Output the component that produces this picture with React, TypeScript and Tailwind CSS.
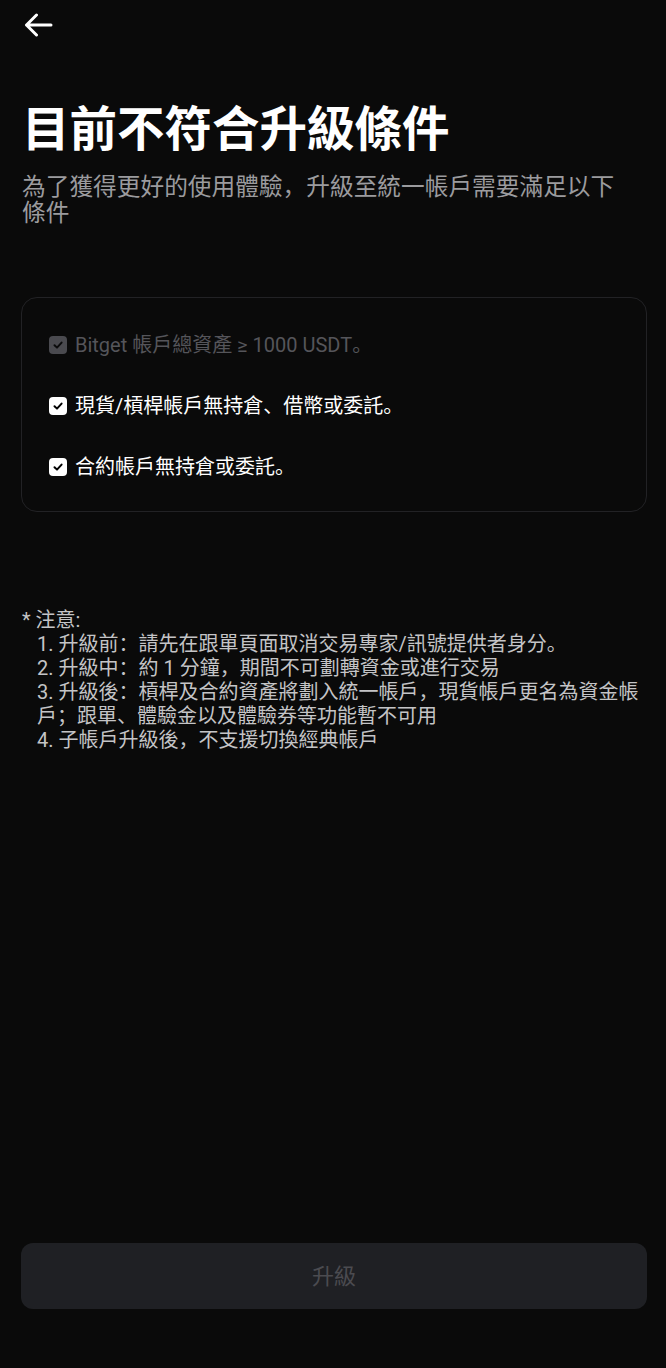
const font = { fontFamily: 'Roboto, "Noto Sans CJK SC", "Noto Sans CJK TC", sans-serif' };

function Check({ muted }: { muted?: boolean }) {
  return (
    <span
      className={`flex h-[18px] w-[18px] shrink-0 items-center justify-center rounded-[4px] ${
        muted ? "bg-[#4a4a4f]" : "bg-white"
      }`}
    >
      <svg width="12" height="12" viewBox="0 0 12 12" fill="none">
        <path
          d="M2.5 6.2 L5 8.6 L9.6 3.6"
          stroke={muted ? "#0b0b0c" : "#000"}
          strokeWidth="2"
          strokeLinecap="round"
          strokeLinejoin="round"
        />
      </svg>
    </span>
  );
}

const conditions = [
  { text: "Bitget 帳戶總資產 ≥ 1000 USDT。", muted: true },
  { text: "現貨/槓桿帳戶無持倉、借幣或委託。", muted: false },
  { text: "合約帳戶無持倉或委託。", muted: false },
];

const notes = [
  "1. 升級前：請先在跟單頁面取消交易專家/訊號提供者身分。",
  "2. 升級中：約 1 分鐘，期間不可劃轉資金或進行交易",
  "3. 升級後：槓桿及合約資產將劃入統一帳戶，現貨帳戶更名為資金帳戶；跟單、體驗金以及體驗券等功能暫不可用",
  "4. 子帳戶升級後，不支援切換經典帳戶",
];

export default function App() {
  return (
    <div className="flex min-h-[1368px] w-full flex-col bg-[#0a0a0a] pl-[21px] pr-[19px] text-white" style={font}>
      <div className="flex h-[50px] items-center">
        <svg width="30" height="24" viewBox="0 0 30 24" fill="none" className="ml-[2px]">
          <path
            d="M3.5 12 H28 M13.5 2 L3.5 12 L13.5 22"
            stroke="#fff"
            strokeWidth="3"
            strokeLinecap="round"
            strokeLinejoin="round"
          />
        </svg>
      </div>

      <h1 className="mt-[52px] pl-[1px] text-[47.5px] font-bold leading-[56px] text-white">目前不符合升級條件</h1>
      <p className="mt-[16px] pl-[1px] pr-[14px] text-[23.7px] leading-[26px] text-[#9b9b9e]">
        為了獲得更好的使用體驗，升級至統一帳戶需要滿足以下條件
      </p>

      <div className="mt-[71px] flex flex-col gap-[33px] rounded-[16px] border border-[#222225] px-[27px] pb-[30px] pt-[33px]">
        {conditions.map((c) => (
          <div key={c.text} className="flex h-[28px] items-center gap-[8px]">
            <Check muted={c.muted} />
            <span className={`text-[20px] leading-[28px] ${c.muted ? "text-[#55555a]" : "text-white"}`}>
              {c.text}
            </span>
          </div>
        ))}
      </div>

      <div className="mt-[96px] pl-[1px] text-[20px] leading-[24px] text-[#c4c4c6]">
        <div>* 注意:</div>
        <div className="pl-[15px]">
          {notes.map((n) => (
            <div key={n}>{n}</div>
          ))}
        </div>
      </div>

      <button className="mb-[59px] mt-auto flex h-[66px] w-full items-center justify-center rounded-[12px] bg-[#1f2024] text-[22px] text-[#4b4b50]">
        升級
      </button>
    </div>
  );
}
